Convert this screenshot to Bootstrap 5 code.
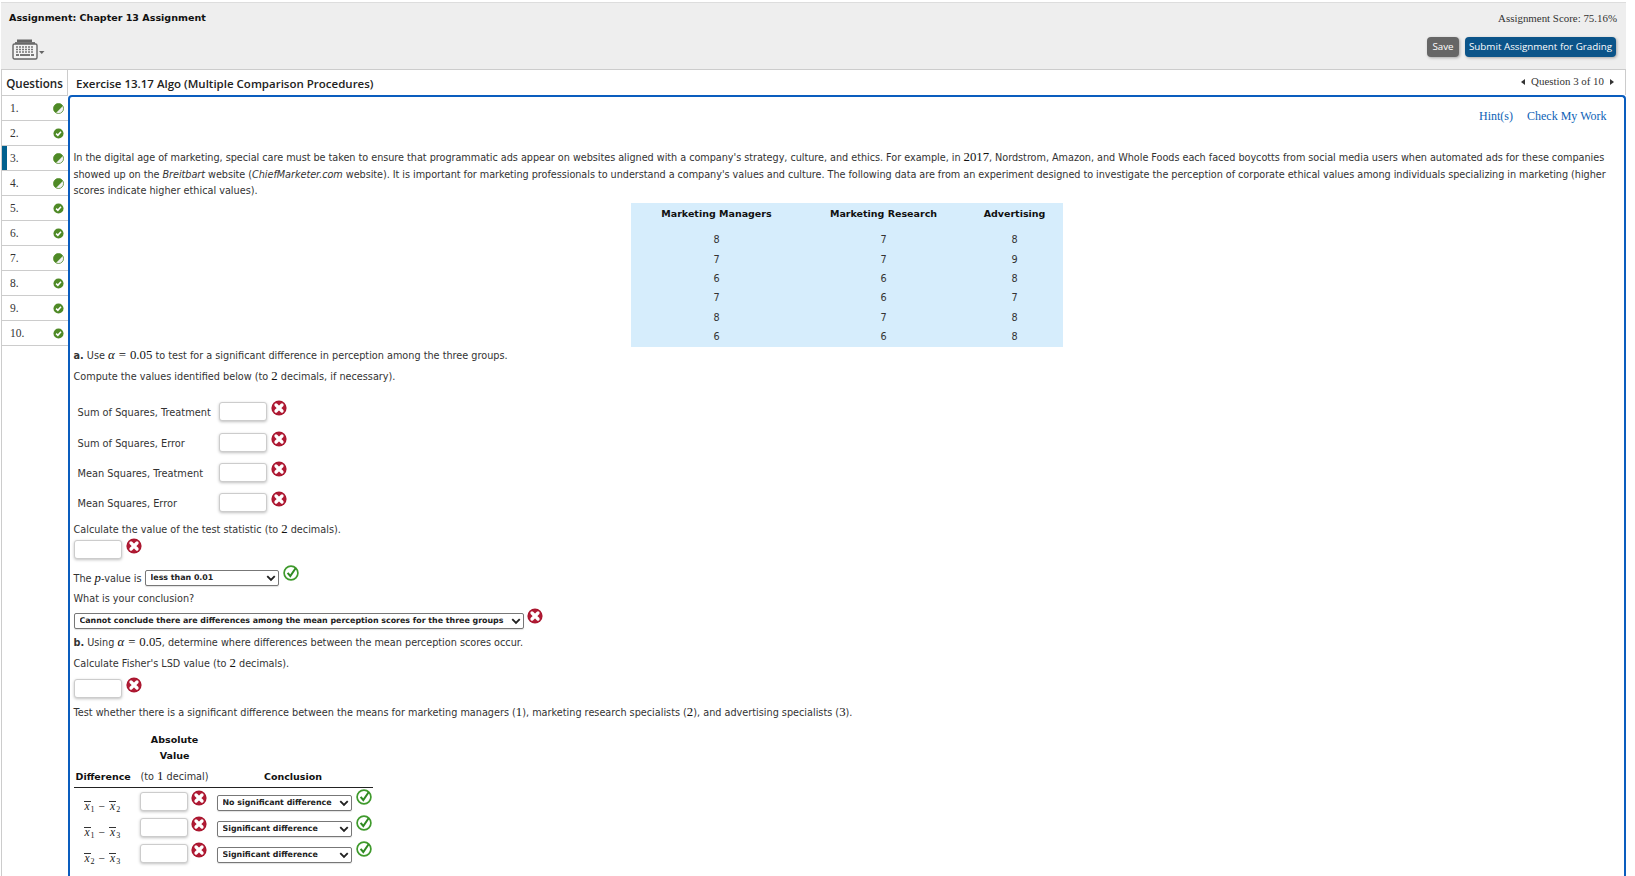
<!DOCTYPE html>
<html lang="en">
<head>
<meta charset="utf-8">
<title>Chapter 13 Assignment</title>
<link href="https://cdn.jsdelivr.net/npm/bootstrap@5.3.0/dist/css/bootstrap.min.css" rel="stylesheet">
<style>
html,body{height:876px;overflow:hidden;background:#fff}
body{font-family:"DejaVu Sans",Verdana,sans-serif;font-size:9.7px;color:#333;line-height:16.5px}
.sf{font-family:"Liberation Serif",Georgia,serif}
.shell{padding-top:2px;width:1626px}
.topbar{margin-left:1px;height:68px;background:#eee;border-top:1px solid #ddd;border-bottom:1px solid #ccc;padding:0 1px 0 8px}
.topline{height:30px}
.ttl{font-weight:700;font-size:9.55px;color:#111}
.score{font-family:"Liberation Serif",serif;font-size:10.9px;color:#333;margin-right:8px}
.toolline{height:27px;padding-right:9px}
.kbd-ico{width:33px;height:22px;margin:7px 0 0 3px}
.btn.act{font-family:"Open Sans",sans-serif;font-size:9.8px;line-height:14px;color:#fff;border:0;border-radius:4px;box-shadow:1px 1px 3px rgba(0,0,0,.3);white-space:nowrap}
.btn.savebtn{background:#666;height:20px;width:32px;padding:3px 0}
.btn.subbtn{background:#0b5489;height:20px;width:151px;padding:3px 0;margin-left:6px}
.tabrow{height:25px;margin-left:1px}
.qtab{width:67px;border-left:1px solid #ccc;border-right:1px solid #ccc;text-align:center;font-family:"Open Sans",sans-serif;font-weight:600;font-size:11.6px;color:#222;line-height:25px;padding-top:1px}
.qtitle{font-family:"Open Sans",sans-serif;font-weight:600;font-size:11.5px;color:#222;line-height:25px;padding:1px 0 0 8px}
.qpos{font-size:10.9px;color:#333;padding-right:11px;border-right:1px solid #ccc;line-height:23px}
.tri{display:inline-block;width:0;height:0;border-top:3px solid transparent;border-bottom:3px solid transparent}
.tri-l{border-right:4px solid #333;margin-right:6px}
.tri-r{border-left:4px solid #333;margin-left:6px}
.mainrow{margin-left:1px;height:790px}
.side{width:67px;flex:none;border-left:1px solid #ccc;border-top:1px solid #ccc;height:790px}
.sitem{height:25px;border-bottom:1px solid #ccc;padding:0 4px 0 8px;font-size:11.5px;color:#333;position:relative}
.sitem.cur::before{content:"";position:absolute;left:0;top:0;bottom:0;width:5px;background:#00608f}
.st{width:11px;height:11px}
.content{flex:1;border:2px solid #0a5dbe;border-bottom:0;border-radius:4px 4px 0 0;padding:0 4.5px 0 3.5px;min-width:0}
.hintrow{height:52px;padding:11px 13px 0 0;font-size:12px}
.hintrow a{color:#0d62b6;text-decoration:none;margin-left:14px}
.para{margin:0}
.ls1{letter-spacing:-.035px}
.ls2{letter-spacing:-.045px}
.math{font-family:"Liberation Serif",serif;font-size:12.8px;color:#111}
.eq{margin:0 4px}
.dtable{--bs-table-bg:#d6edfc;--bs-table-color:#333;width:432px;margin:3px auto 0;table-layout:fixed;font-size:9.7px}
.dtable th{padding:3px 0 0 2px;height:28px;vertical-align:top;text-align:center;color:#111;font-size:9.5px}
.dtable td{padding:0 0 0 2px;height:19.4px;text-align:center;vertical-align:middle;line-height:16px}
.lbl-a{margin:0;height:17px;line-height:17px}
.mt4{margin-top:4px}
.ansblock{margin-top:17.5px;padding-left:4px;height:119px}
.ansrow{height:30.33px}
.anslabel{width:141.5px;padding-top:1px;line-height:19px;color:#333;font-size:9.8px}
.form-control.blank{width:48px;height:19px;min-height:0;padding:0 3px;border:1px solid #ccc;border-radius:3px;box-shadow:0 1px 3px rgba(0,0,0,.25);flex:none;background:#fff}
.mk{width:16px;height:16px;flex:none;margin-left:4px;margin-top:-2px}
.form-select.pick{height:16px;min-height:0;font-size:7.9px;font-weight:700;font-family:"DejaVu Sans",sans-serif;color:#222;padding:0 14px 0 5px;line-height:14px;border:1px solid #777;border-radius:2px;background-image:url("data:image/svg+xml,%3csvg xmlns='http://www.w3.org/2000/svg' viewBox='0 0 16 16'%3e%3cpath fill='none' stroke='%23222' stroke-width='3' d='M2 5l6 6 6-6'/%3e%3c/svg%3e");background-size:10px 10px;background-position:right 2px center;box-shadow:0 1px 1px rgba(0,0,0,.12);flex:none}
.sel-p{width:134px}
.sel-c{width:450px}
.sel-d{width:135px}
.calc-in{margin-top:2px}
.pv{margin-top:11px;height:16px;line-height:16px}
.pv .mk{margin-top:-5px}
.wy{margin-top:4px}
.cc{margin-top:5.5px;height:16px}
.cc .mk{margin-top:-5px;margin-left:3px}
.bb{margin-top:5px}
.lsd{margin-top:7.5px}
.tw{margin-top:5.5px}
.cmp{width:299px;margin:11px 0 0;table-layout:fixed;--bs-table-bg:transparent;--bs-table-color:#333;font-size:9.7px}
.cmp th,.cmp td{padding:0;vertical-align:bottom}
.cmp thead th{text-align:center;color:#111;font-size:9.5px;line-height:16px;padding-bottom:2px}
.cmp thead th.thdiff{text-align:left;padding-left:2px;white-space:nowrap}
.cmp thead tr{border-bottom:1px solid #222}
.cmp .nb{font-weight:400;color:#333;font-size:9.7px;white-space:nowrap}
.cmp tbody td{height:25px;vertical-align:top}
.cmp td.xd{padding:10px 0 0 10px;font-family:"Liberation Serif",serif;font-size:11.5px;line-height:16px;color:#222;white-space:nowrap}
.xbar{display:inline-block;font-style:italic;line-height:8px;border-top:1px solid #333;padding:0 1px}
.xd sub{font-size:8px}
.mns{margin:0 4px}
.cell-in{padding:4.5px 0 0 4px}
.cell-se{padding:7.5px 0 0 3px}
.cell-se .mk{margin-top:-6px}
.cell-in .mk{margin-top:-2px;margin-left:3px}
</style>
</head>
<body>
<svg width="0" height="0" class="d-none">
<symbol id="okfull" viewBox="0 0 12 12"><circle cx="6" cy="6" r="5.5" fill="#4f8a26"/><path d="M3.4 6.2 5.3 8 8.7 4.2" fill="none" stroke="#fff" stroke-width="1.7"/></symbol>
<symbol id="okpart" viewBox="0 0 12 12"><circle cx="6" cy="6" r="5.5" fill="#4f8a26"/><path d="M10.8 3.2A5.5 5.5 0 0 1 3.2 10.8Z" fill="#f2f2f2"/><circle cx="6" cy="6" r="5.5" fill="none" stroke="#4f8a26" stroke-width=".8"/></symbol>
<symbol id="wrong" viewBox="0 0 16 16"><circle cx="8" cy="8" r="7.6" fill="#a8162e"/><circle cx="8" cy="8" r="6.6" fill="#b01a34"/><path d="M5 5l6 6M11 5l-6 6" stroke="#fff" stroke-width="3.3" stroke-linecap="round"/></symbol>
<symbol id="right" viewBox="0 0 16 16"><circle cx="8" cy="8" r="6.9" fill="#fff" stroke="#3f9a2c" stroke-width="1.7"/><path d="M4.6 7.8 7.3 11 12.6 3.2" fill="none" stroke="#2f8a22" stroke-width="2"/></symbol>
</svg>

<div class="shell">
  <div class="topbar">
    <div class="topline d-flex justify-content-between align-items-center">
      <span class="ttl">Assignment: Chapter 13 Assignment</span>
      <span class="score">Assignment Score: 75.16%</span>
    </div>
    <div class="toolline d-flex justify-content-between align-items-center">
      <svg class="kbd-ico" viewBox="0 0 33 22" role="img" aria-label="Keyboard">
        <rect x="5" y="0.5" width="15" height="2.5" fill="#666"/><rect x="3" y="3" width="20" height="2" fill="#777"/>
        <rect x="1" y="5" width="24" height="15" rx="1.5" fill="#f4f4f4" stroke="#666" stroke-width="1.4"/>
        <path d="M4 8h18M4 10.5h18M4 13h18" stroke="#777" stroke-width="1.6" stroke-dasharray="2 1"/>
        <path d="M4 16h3M8 16h10M19 16h3" stroke="#777" stroke-width="1.8"/>
        <path d="M27 12h5.5l-2.75 3z" fill="#666"/>
      </svg>
      <div class="d-flex">
        <button type="button" class="btn act savebtn">Save</button>
        <button type="button" class="btn act subbtn">Submit Assignment for Grading</button>
      </div>
    </div>
  </div>

  <div class="tabrow d-flex">
    <div class="qtab">Questions</div>
    <div class="qtitle flex-grow-1">Exercise 13.17 Algo (Multiple Comparison Procedures)</div>
    <div class="qpos sf"><span class="tri tri-l"></span>Question 3 of 10<span class="tri tri-r"></span></div>
  </div>

  <div class="mainrow d-flex">
    <div class="side">
      <div class="sitem sf d-flex justify-content-between align-items-center">1.<svg class="st"><use href="#okpart"/></svg></div>
      <div class="sitem sf d-flex justify-content-between align-items-center">2.<svg class="st"><use href="#okfull"/></svg></div>
      <div class="sitem cur sf d-flex justify-content-between align-items-center">3.<svg class="st"><use href="#okpart"/></svg></div>
      <div class="sitem sf d-flex justify-content-between align-items-center">4.<svg class="st"><use href="#okpart"/></svg></div>
      <div class="sitem sf d-flex justify-content-between align-items-center">5.<svg class="st"><use href="#okfull"/></svg></div>
      <div class="sitem sf d-flex justify-content-between align-items-center">6.<svg class="st"><use href="#okfull"/></svg></div>
      <div class="sitem sf d-flex justify-content-between align-items-center">7.<svg class="st"><use href="#okpart"/></svg></div>
      <div class="sitem sf d-flex justify-content-between align-items-center">8.<svg class="st"><use href="#okfull"/></svg></div>
      <div class="sitem sf d-flex justify-content-between align-items-center">9.<svg class="st"><use href="#okfull"/></svg></div>
      <div class="sitem sf d-flex justify-content-between align-items-center">10.<svg class="st"><use href="#okfull"/></svg></div>
    </div>

    <div class="content">
      <div class="hintrow sf text-end"><a href="#">Hint(s)</a><a href="#">Check My Work</a></div>
      <p class="para"><span class="ls1">In the digital age of marketing, special care must be taken to ensure that programmatic ads appear on websites aligned with a company's strategy, culture, and ethics. For example, in <span class="math">2017</span>, Nordstrom, Amazon, and Whole Foods each faced boycotts from social media users when automated ads for these companies</span> <span class="ls2">showed up on the <em>Breitbart</em> website (<em>ChiefMarketer.com</em> website). It is important for marketing professionals to understand a company's values and culture. The following data are from an experiment designed to investigate the perception of corporate ethical values among individuals specializing in marketing (higher</span> scores indicate higher ethical values).</p>

      <table class="table table-borderless dtable">
        <colgroup><col style="width:170px"><col style="width:164px"><col style="width:98px"></colgroup>
        <thead><tr><th>Marketing Managers</th><th>Marketing Research</th><th>Advertising</th></tr></thead>
        <tbody>
          <tr><td>8</td><td>7</td><td>8</td></tr>
          <tr><td>7</td><td>7</td><td>9</td></tr>
          <tr><td>6</td><td>6</td><td>8</td></tr>
          <tr><td>7</td><td>6</td><td>7</td></tr>
          <tr><td>8</td><td>7</td><td>8</td></tr>
          <tr><td>6</td><td>6</td><td>8</td></tr>
        </tbody>
      </table>

      <p class="lbl-a"><b>a.</b> Use <span class="math"><i>α</i><span class="eq">=</span>0.05</span> to test for a significant difference in perception among the three groups.</p>
      <p class="lbl-a mt4">Compute the values identified below (to <span class="math">2</span> decimals, if necessary).</p>

      <div class="ansblock">
        <div class="ansrow d-flex align-items-start"><span class="anslabel">Sum of Squares, Treatment</span><input class="form-control blank" type="text" aria-label="Sum of Squares, Treatment"><svg class="mk"><use href="#wrong"/></svg></div>
        <div class="ansrow d-flex align-items-start"><span class="anslabel">Sum of Squares, Error</span><input class="form-control blank" type="text" aria-label="Sum of Squares, Error"><svg class="mk"><use href="#wrong"/></svg></div>
        <div class="ansrow d-flex align-items-start"><span class="anslabel">Mean Squares, Treatment</span><input class="form-control blank" type="text" aria-label="Mean Squares, Treatment"><svg class="mk"><use href="#wrong"/></svg></div>
        <div class="ansrow d-flex align-items-start"><span class="anslabel">Mean Squares, Error</span><input class="form-control blank" type="text" aria-label="Mean Squares, Error"><svg class="mk"><use href="#wrong"/></svg></div>
      </div>

      <p class="lbl-a">Calculate the value of the test statistic (to <span class="math">2</span> decimals).</p>
      <div class="d-flex align-items-start calc-in"><input class="form-control blank" type="text" aria-label="Test statistic"><svg class="mk"><use href="#wrong"/></svg></div>

      <div class="d-flex align-items-start pv"><span>The <span class="math"><i>p</i></span>-value is&nbsp;</span><select class="form-select pick sel-p" aria-label="p-value"><option>less than 0.01</option></select><svg class="mk"><use href="#right"/></svg></div>
      <p class="lbl-a wy">What is your conclusion?</p>
      <div class="d-flex align-items-start cc"><select class="form-select pick sel-c" aria-label="Conclusion"><option>Cannot conclude there are differences among the mean perception scores for the three groups</option></select><svg class="mk"><use href="#wrong"/></svg></div>

      <p class="lbl-a bb"><b>b.</b> Using <span class="math"><i>α</i><span class="eq">=</span>0.05</span>, determine where differences between the mean perception scores occur.</p>
      <p class="lbl-a mt4">Calculate Fisher's LSD value (to <span class="math">2</span> decimals).</p>
      <div class="d-flex align-items-start lsd"><input class="form-control blank" type="text" aria-label="LSD"><svg class="mk"><use href="#wrong"/></svg></div>
      <p class="lbl-a tw">Test whether there is a significant difference between the means for marketing managers (<span class="math">1</span>), marketing research specialists (<span class="math">2</span>), and advertising specialists (<span class="math">3</span>).</p>

      <table class="table table-borderless cmp">
        <colgroup><col style="width:62px"><col style="width:78px"><col style="width:159px"></colgroup>
        <thead>
          <tr>
            <th class="thdiff">Difference</th>
            <th><span class="d-block">Absolute</span><span class="d-block">Value</span><span class="d-block nb mt-1">(to <span class="math">1</span> decimal)</span></th>
            <th>Conclusion</th>
          </tr>
        </thead>
        <tbody>
          <tr>
            <td class="xd"><span class="xbar">x</span><sub>1</sub><span class="mns">−</span><span class="xbar">x</span><sub>2</sub></td>
            <td><div class="cell-in d-flex align-items-start"><input class="form-control blank" type="text" aria-label="x1 - x2"><svg class="mk"><use href="#wrong"/></svg></div></td>
            <td><div class="cell-se d-flex align-items-start"><select class="form-select pick sel-d" aria-label="x1 - x2 conclusion"><option>No significant difference</option></select><svg class="mk"><use href="#right"/></svg></div></td>
          </tr>
          <tr>
            <td class="xd"><span class="xbar">x</span><sub>1</sub><span class="mns">−</span><span class="xbar">x</span><sub>3</sub></td>
            <td><div class="cell-in d-flex align-items-start"><input class="form-control blank" type="text" aria-label="x1 - x3"><svg class="mk"><use href="#wrong"/></svg></div></td>
            <td><div class="cell-se d-flex align-items-start"><select class="form-select pick sel-d" aria-label="x1 - x3 conclusion"><option>Significant difference</option></select><svg class="mk"><use href="#right"/></svg></div></td>
          </tr>
          <tr>
            <td class="xd"><span class="xbar">x</span><sub>2</sub><span class="mns">−</span><span class="xbar">x</span><sub>3</sub></td>
            <td><div class="cell-in d-flex align-items-start"><input class="form-control blank" type="text" aria-label="x2 - x3"><svg class="mk"><use href="#wrong"/></svg></div></td>
            <td><div class="cell-se d-flex align-items-start"><select class="form-select pick sel-d" aria-label="x2 - x3 conclusion"><option>Significant difference</option></select><svg class="mk"><use href="#right"/></svg></div></td>
          </tr>
        </tbody>
      </table>
    </div>
  </div>
</div>
<script src="https://cdn.jsdelivr.net/npm/bootstrap@5.3.0/dist/js/bootstrap.bundle.min.js"></script>
</body>
</html>
